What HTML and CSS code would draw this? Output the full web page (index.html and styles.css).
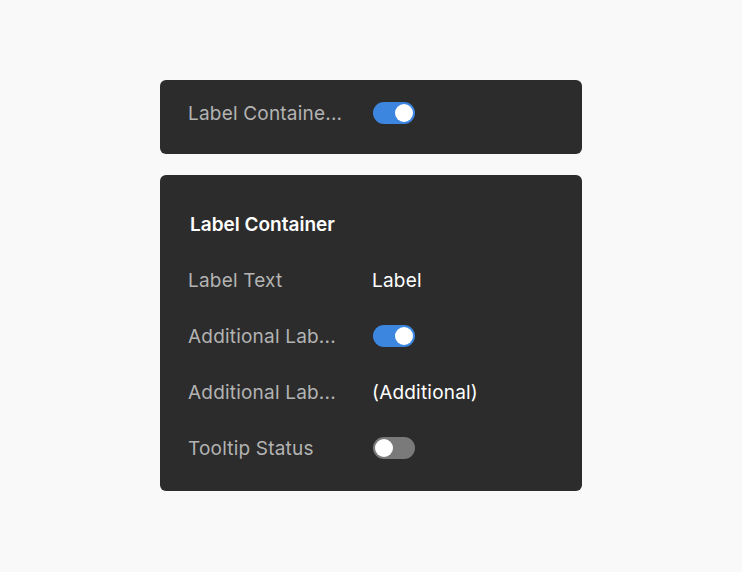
FILE: index.html
```html
<!DOCTYPE html>
<html>
<head>
<meta charset="utf-8">
<link rel="stylesheet" href="styles.css">
</head>
<body>
<div class="page">
  <div class="panel panel-compact">
    <div class="row">
      <span class="label">Label Containe...</span>
      <span class="toggle on"><span class="knob"></span></span>
    </div>
  </div>
  <div class="panel panel-full">
    <div class="row heading-row"><span class="heading">Label Container</span></div>
    <div class="row">
      <span class="label">Label Text</span>
      <span class="value">Label</span>
    </div>
    <div class="row">
      <span class="label">Additional Lab...</span>
      <span class="toggle on"><span class="knob"></span></span>
    </div>
    <div class="row">
      <span class="label">Additional Lab...</span>
      <span class="value">(Additional)</span>
    </div>
    <div class="row">
      <span class="label">Tooltip Status</span>
      <span class="toggle off"><span class="knob"></span></span>
    </div>
  </div>
</div>
</body>
</html>
```
FILE: styles.css
```css
html, body {
  margin: 0;
  padding: 0;
  background: #f9f9f9;
}
body {
  font-family: Inter, "Noto Sans", sans-serif;
  font-size: 19px;
  letter-spacing: 0.2px;
}
.page {
  width: 422px;
  margin: 0 auto;
  padding-top: 80px;
  display: flex;
  flex-direction: column;
  gap: 21px;
}
.panel {
  background: #2c2c2c;
  border-radius: 6px;
}
.panel-compact {
  height: 74px;
  box-sizing: border-box;
  padding-bottom: 8px;
  display: flex;
  align-items: center;
}
.panel-full {
  padding: 21px 0 15px;
}
.row {
  height: 56px;
  display: flex;
  align-items: center;
  padding-left: 28px;
}
.panel-compact .row {
  height: auto;
}
.heading {
  color: #ffffff;
  font-weight: 600;
  letter-spacing: 0;
  padding-left: 2px;
}
.label {
  color: #b3b3b3;
  width: 184px;
  flex: none;
  white-space: nowrap;
}
.value {
  color: #ffffff;
}
.toggle {
  width: 42px;
  height: 22px;
  border-radius: 11px;
  box-sizing: border-box;
  padding: 2px;
  display: flex;
  margin-left: 1px;
}
.toggle.on {
  background: #3d86e0;
  justify-content: flex-end;
}
.toggle.off {
  background: #7a7a7a;
  justify-content: flex-start;
}
.knob {
  width: 18px;
  height: 18px;
  border-radius: 50%;
  background: #ffffff;
}
```
